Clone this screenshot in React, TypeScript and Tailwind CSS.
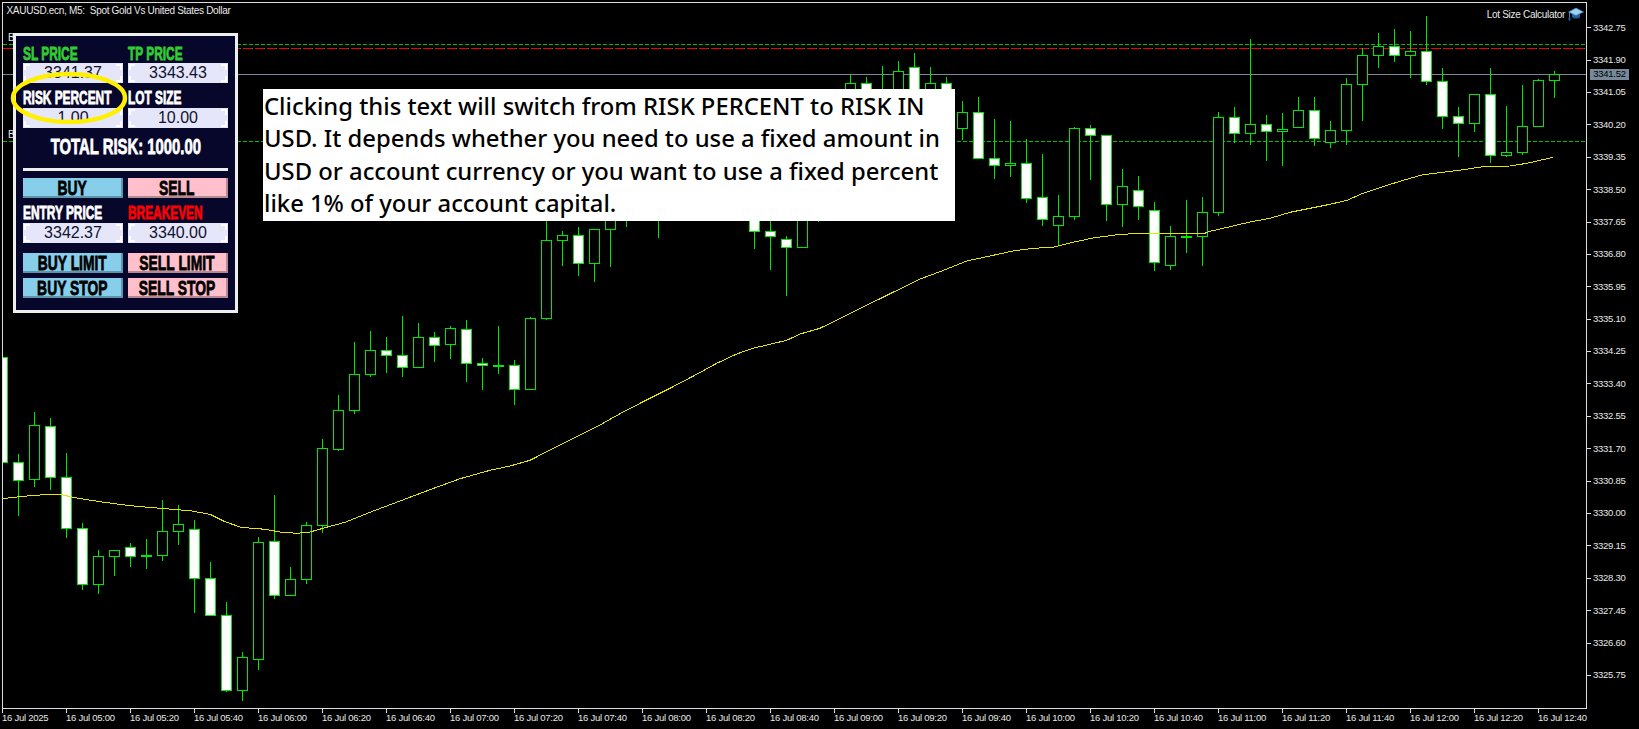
import React from 'react';

// i, wick top, wick bottom, body top, body bottom, white body
type Bar = [number, number, number, number, number, boolean];

const bars: Bar[] = [
  [0, 340, 470, 357, 462, true], [1, 454, 516, 462, 480, true], [2, 412, 487, 425, 479, false], [3, 418, 490, 426, 477, true],
  [4, 453, 538, 477, 528, true], [5, 523, 590, 528, 584, true], [6, 550, 594, 556, 584, false], [7, 550, 576, 550, 556, false],
  [8, 543, 567, 547, 556, true], [9, 539, 569, 555, 556, true], [10, 500, 561, 531, 555, false], [11, 505, 545, 524, 531, false],
  [12, 520, 613, 529, 578, true], [13, 562, 615, 578, 615, true], [14, 602, 692, 615, 690, true], [15, 652, 701, 657, 690, false],
  [16, 537, 670, 542, 659, false], [17, 495, 599, 541, 595, true], [18, 567, 595, 579, 595, false], [19, 522, 584, 525, 579, false],
  [20, 439, 533, 448, 525, false], [21, 395, 451, 410, 449, false], [22, 342, 414, 374, 410, false], [23, 331, 377, 350, 374, false],
  [24, 337, 373, 350, 355, true], [25, 316, 377, 355, 367, true], [26, 323, 367, 337, 367, false], [27, 332, 362, 337, 345, true],
  [28, 326, 359, 328, 344, false], [29, 320, 382, 329, 363, true], [30, 358, 390, 363, 365, true], [31, 326, 374, 365, 366, true],
  [32, 360, 405, 365, 389, true], [33, 317, 389, 318, 389, false], [34, 215, 320, 240, 318, false], [35, 231, 266, 235, 240, false],
  [36, 227, 276, 235, 263, true], [37, 229, 282, 229, 263, false], [38, 210, 267, 210, 229, false], [39, 210, 227, 210, 212, false],
  [41, 210, 238, 210, 212, false], [47, 210, 249, 210, 231, true], [48, 210, 270, 231, 236, true], [49, 236, 296, 239, 247, true],
  [50, 210, 248, 210, 247, false], [51, 210, 222, 210, 212, false], [53, 75, 120, 83, 120, false], [54, 77, 120, 83, 120, true],
  [55, 66, 120, 100, 120, false], [56, 61, 120, 71, 120, false], [57, 53, 120, 67, 120, true], [58, 67, 120, 83, 120, false],
  [59, 77, 120, 83, 120, true], [60, 101, 140, 112, 128, false], [61, 97, 158, 112, 158, true], [62, 119, 179, 158, 165, true],
  [63, 121, 177, 163, 165, false], [64, 139, 203, 163, 198, true], [65, 154, 226, 197, 219, true], [66, 195, 246, 216, 225, false],
  [67, 127, 220, 128, 216, false], [68, 125, 180, 128, 135, true], [69, 135, 221, 135, 204, true], [70, 169, 227, 186, 204, false],
  [71, 176, 220, 190, 206, true], [72, 202, 271, 210, 262, true], [73, 226, 270, 236, 265, false], [74, 200, 253, 236, 237, false],
  [75, 197, 266, 212, 236, false], [76, 112, 216, 117, 212, false], [77, 107, 143, 117, 133, true], [78, 39, 145, 124, 133, false],
  [79, 115, 161, 124, 131, true], [80, 113, 166, 129, 131, false], [81, 97, 127, 110, 127, false], [82, 97, 146, 110, 138, true],
  [83, 121, 148, 130, 142, false], [84, 78, 145, 84, 130, false], [85, 48, 121, 55, 84, false], [86, 33, 68, 46, 55, false],
  [87, 29, 62, 46, 55, true], [88, 31, 78, 51, 55, false], [89, 16, 85, 51, 81, true], [90, 68, 129, 81, 116, true],
  [91, 107, 157, 116, 123, true], [92, 94, 132, 94, 123, false], [93, 68, 163, 94, 155, true], [94, 106, 157, 152, 155, false],
  [95, 85, 155, 126, 152, false], [96, 79, 127, 80, 126, false], [97, 71, 98, 74, 80, false],
];

const maPoints = '3,498.5 30,495.7 50,494.3 60,494.3 75,497.7 100,501.7 130,505.7 160,508.3 190,510.7 210,514.3 225,521.7 241,527.3 265,529.3 280,532 297,533.3 310,532 330,526.3 345,522.3 370,512.3 400,501 430,489.7 460,478.7 490,470.3 510,466 530,460.3 550,450 570,440 600,425 620,413.7 640,403.3 650,398.3 670,388.3 696.7,374.3 716.7,363.3 736.7,354 753,348.3 786.7,340.3 800,334 820,328.3 920,279 940,271.7 966.7,261 986.7,256.7 1013,251 1033,248.3 1053,247.3 1073,242.3 1093,238 1120,234.3 1147,233.3 1203,234 1210,231.3 1230,226.7 1250,222 1270,218.3 1290,212.3 1310,208.3 1330,204.3 1347,200.3 1363,193.3 1383,186.7 1403,180.3 1423,174.7 1443,172.3 1463,169.7 1483,166.7 1510,166 1527,163.3 1553,157.3';

const prices = ['3342.75', '3341.90', '3341.05', '3340.20', '3339.35', '3338.50', '3337.65', '3336.80', '3335.95', '3335.10', '3334.25', '3333.40', '3332.55', '3331.70', '3330.85', '3330.00', '3329.15', '3328.30', '3327.45', '3326.60', '3325.75'];

const times = ['16 Jul 2025', '16 Jul 05:00', '16 Jul 05:20', '16 Jul 05:40', '16 Jul 06:00', '16 Jul 06:20', '16 Jul 06:40', '16 Jul 07:00', '16 Jul 07:20', '16 Jul 07:40', '16 Jul 08:00', '16 Jul 08:20', '16 Jul 08:40', '16 Jul 09:00', '16 Jul 09:20', '16 Jul 09:40', '16 Jul 10:00', '16 Jul 10:20', '16 Jul 10:40', '16 Jul 11:00', '16 Jul 11:20', '16 Jul 11:40', '16 Jul 12:00', '16 Jul 12:20', '16 Jul 12:40'];

const Candles = () => (
  <svg className="block w-full h-full" viewBox="3 3 1583 705" shapeRendering="crispEdges">
    <line x1="3" x2="1586" y1="74.5" y2="74.5" stroke="#778899" />
    <line x1="3" x2="1586" y1="44.5" y2="44.5" stroke="#00c000" strokeDasharray="4 2" />
    <line x1="3" x2="1586" y1="48.5" y2="48.5" stroke="#00c000" strokeDasharray="4 2" />
    <line x1="3" x2="1586" y1="48.5" y2="48.5" stroke="#f00000" strokeDasharray="9 3" />
    <line x1="3" x2="1586" y1="141.5" y2="141.5" stroke="#00c000" strokeDasharray="4 2" />
    {bars.map(([i, wt, wb, bt, bb, white]) => {
      const c = 2 + 16 * i + 0.5;
      return (
        <g key={i}>
          <line x1={c} x2={c} y1={wt} y2={wb} stroke="#00e800" />
          <rect x={c - 5} y={bt + 0.5} width={10} height={bb - bt} fill={white ? '#ffffff' : '#000000'} stroke="#00e800" />
        </g>
      );
    })}
    <polyline points={maPoints} fill="none" stroke="#e6e600" />
  </svg>
);

const Heavy = ({ text, color, size, center }: { text: string; color: string; size: string; center?: boolean }) => (
  <span
    className={`inline-block whitespace-nowrap font-bold scale-x-[0.66] [-webkit-text-stroke:0.8px_currentColor] leading-none ${color} ${size} ${center ? 'origin-center' : 'origin-left'}`}
  >
    {text}
  </span>
);

const Label = ({ text, color }: { text: string; color: string }) => (
  <div className="h-[14px] flex items-center">
    <Heavy text={text} color={color} size="text-[18px]" />
  </div>
);

const Field = ({ value }: { value: string }) => (
  <div className="relative h-[20px] bg-[#e6e6fa] flex items-center justify-center text-[16px] text-[#10122e]">
    {value}
    <span className="absolute left-[1px] top-[1px] w-[6px] h-[6px] border-l-2 border-t-2 border-white" />
    <span className="absolute right-[1px] top-[1px] w-[6px] h-[6px] border-r-2 border-t-2 border-white" />
    <span className="absolute left-[1px] bottom-[1px] w-[6px] h-[6px] border-l-2 border-b-2 border-white" />
    <span className="absolute right-[1px] bottom-[1px] w-[6px] h-[6px] border-r-2 border-b-2 border-white" />
  </div>
);

const TradeButton = ({ text, kind }: { text: string; kind: 'buy' | 'sell' }) => (
  <div
    className={`h-[20px] flex items-center justify-center border-r-2 border-b-2 ${kind === 'buy' ? 'bg-[#87ceeb] border-[#5f95ab]' : 'bg-[#ffc0cb] border-[#b58a92]'}`}
  >
    <Heavy text={text} color="text-black" size="text-[21px]" center />
  </div>
);

const Panel = () => (
  <div className="absolute left-[10px] top-[30px] w-[225px] h-[280px] border-[3px] border-[#eeeeee] bg-[#07072c] pl-[7px] pr-[7px] pt-[11px]">
    <div className="grid grid-cols-[100px_100px] gap-x-[5px]">
      <Label text="SL PRICE" color="text-[#32cd32]" />
      <Label text="TP PRICE" color="text-[#32cd32]" />
      <div className="col-span-2 h-[2px]" />
      <Field value="3341.37" />
      <Field value="3343.43" />
      <div className="col-span-2 h-[8px]" />
      <Label text="RISK PERCENT" color="text-white" />
      <Label text="LOT SIZE" color="text-white" />
      <div className="col-span-2 h-[3px]" />
      <Field value="1.00" />
      <Field value="10.00" />
    </div>
    <div className="mt-[11px] h-[17px] flex items-center justify-center">
      <Heavy text="TOTAL RISK: 1000.00" color="text-white" size="text-[22.5px]" center />
    </div>
    <div className="mt-[12px] h-[3px] w-[205px] bg-[#eeeeee]" />
    <div className="mt-[7px] grid grid-cols-[100px_100px] gap-x-[5px]">
      <TradeButton text="BUY" kind="buy" />
      <TradeButton text="SELL" kind="sell" />
      <div className="col-span-2 h-[8px]" />
      <Label text="ENTRY PRICE" color="text-white" />
      <Label text="BREAKEVEN" color="text-[#ff0000]" />
      <div className="col-span-2 h-[3px]" />
      <Field value="3342.37" />
      <Field value="3340.00" />
      <div className="col-span-2 h-[10px]" />
      <TradeButton text="BUY LIMIT" kind="buy" />
      <TradeButton text="SELL LIMIT" kind="sell" />
      <div className="col-span-2 h-[5px]" />
      <TradeButton text="BUY STOP" kind="buy" />
      <TradeButton text="SELL STOP" kind="sell" />
    </div>
  </div>
);

const CapIcon = () => (
  <svg width="16" height="14" viewBox="0 0 16 14">
    <path d="M4 6.5 V10 C6 12 10 12 12 10 V6.5 Z" fill="#1f5f9e" />
    <path d="M0.5 5 L8 1 L15.5 5 L8 8.5 Z" fill="#9fd0f0" stroke="#3a86c8" strokeWidth="0.7" />
    <rect x="1" y="5" width="1" height="6" fill="#3a86c8" />
    <rect x="0.5" y="10.5" width="2" height="3" fill="#1f5f9e" />
  </svg>
);

export default function App() {
  return (
    <div className="w-[1639px] h-[729px] bg-black pl-[2px] pt-[2px] overflow-hidden font-['Liberation_Sans',sans-serif] text-[#e8e8e8]">
      <div className="flex">
        <div className="relative w-[1585px] h-[707px] border border-[#dddddd] overflow-hidden">
          <Candles />
          <span className="absolute left-[3.5px] top-[1px] text-[10px] tracking-[-0.3px] leading-[13px] whitespace-pre">XAUUSD.ecn, M5:  Spot Gold Vs United States Dollar</span>
          <span className="absolute left-[5px] top-[29px] text-[10px] leading-[12px]">B</span>
          <span className="absolute left-[5px] top-[126px] text-[10px] leading-[12px]">B</span>
          <div className="absolute right-[2px] top-[4px] flex items-center gap-[3px] text-[10px] tracking-[-0.3px] leading-[13px]">
            <span>Lot Size Calculator</span>
            <CapIcon />
          </div>
          <Panel />
          <svg className="absolute left-[6px] top-[67px]" width="120" height="56" viewBox="0 0 120 56">
            <ellipse cx="60" cy="28" rx="56" ry="24" fill="none" stroke="#fff000" strokeWidth="4.5" />
          </svg>
          <div className="absolute left-[260px] top-[86px] w-[692px] h-[132px] bg-white pl-[1px] pt-[1px] text-black font-['Noto_Sans',sans-serif] font-medium text-[23.8px] leading-[32.3px] whitespace-nowrap">
            Clicking this text will switch from RISK PERCENT to RISK IN<br />
            USD. It depends whether you need to use a fixed amount in<br />
            USD or account currency or you want to use a fixed percent<br />
            like 1% of your account capital.
          </div>
        </div>
        <div className="relative flex flex-col pt-[9.5px] text-[9.5px] tracking-[-0.25px]">
          {prices.map((p) => (
            <div key={p} className="h-[32.4px] flex items-center gap-[2px]">
              <span className="w-[4px] h-[1px] bg-[#dddddd]" />
              <span>{p}</span>
            </div>
          ))}
          <div className="absolute left-[3px] top-[67px] w-[39px] h-[11px] bg-[#778899] text-black flex items-center justify-center">3341.52</div>
        </div>
      </div>
      <div className="flex text-[9.5px] tracking-[-0.25px] leading-[9px]">
        {times.map((t) => (
          <div key={t} className="w-[64px] shrink-0">
            <div className="w-[1px] h-[4px] bg-[#dddddd]" />
            <span className="whitespace-pre">{t}</span>
          </div>
        ))}
      </div>
    </div>
  );
}
